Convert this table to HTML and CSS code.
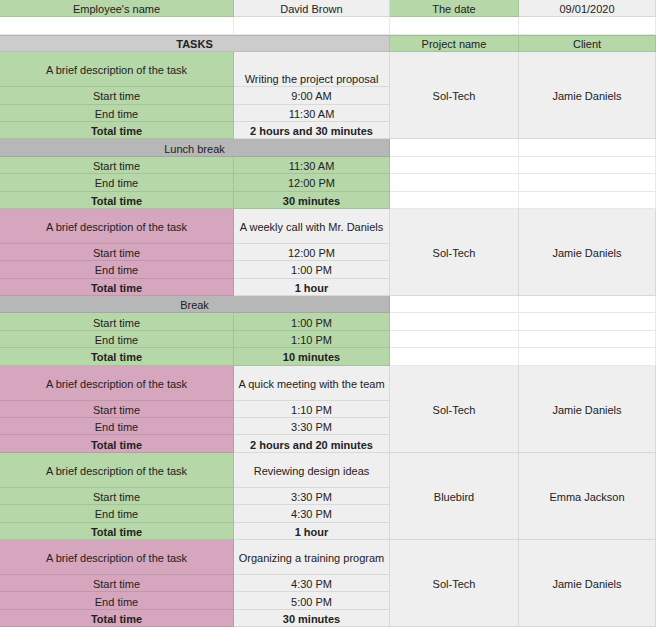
FILE: index.html
```html
<!DOCTYPE html>
<html lang="en">
<head>
<meta charset="utf-8">
<title>Timesheet</title>
<link rel="stylesheet" href="styles.css">
</head>
<body>
<div class="sheet">
  <div class="c g">Employee's name</div>
  <div class="c l">David Brown</div>
  <div class="c g">The date</div>
  <div class="c l">09/01/2020</div>

  <div class="c w"></div><div class="c w"></div><div class="c w"></div><div class="c w"></div>

  <div class="c h b span2 top">TASKS</div>
  <div class="c g top">Project name</div>
  <div class="c g top">Client</div>

  <!-- Task 1 -->
  <div class="c g">A brief description of the task</div>
  <div class="c l bottom">Writing the project proposal</div>
  <div class="c l span4">Sol-Tech</div>
  <div class="c l span4">Jamie Daniels</div>
  <div class="c g">Start time</div><div class="c l">9:00 AM</div>
  <div class="c g">End time</div><div class="c l">11:30 AM</div>
  <div class="c g b">Total time</div><div class="c l b">2 hours and 30 minutes</div>

  <!-- Lunch -->
  <div class="c k span2">Lunch break</div><div class="c w"></div><div class="c w"></div>
  <div class="c g">Start time</div><div class="c g">11:30 AM</div><div class="c w"></div><div class="c w"></div>
  <div class="c g">End time</div><div class="c g">12:00 PM</div><div class="c w"></div><div class="c w"></div>
  <div class="c g b">Total time</div><div class="c g b">30 minutes</div><div class="c w"></div><div class="c w"></div>

  <!-- Task 2 -->
  <div class="c p">A brief description of the task</div>
  <div class="c l">A weekly call with Mr. Daniels</div>
  <div class="c l span4">Sol-Tech</div>
  <div class="c l span4">Jamie Daniels</div>
  <div class="c p">Start time</div><div class="c l">12:00 PM</div>
  <div class="c p">End time</div><div class="c l">1:00 PM</div>
  <div class="c p b">Total time</div><div class="c l b">1 hour</div>

  <!-- Break -->
  <div class="c k span2">Break</div><div class="c w"></div><div class="c w"></div>
  <div class="c g">Start time</div><div class="c g">1:00 PM</div><div class="c w"></div><div class="c w"></div>
  <div class="c g">End time</div><div class="c g">1:10 PM</div><div class="c w"></div><div class="c w"></div>
  <div class="c g b">Total time</div><div class="c g b">10 minutes</div><div class="c w"></div><div class="c w"></div>

  <!-- Task 3 -->
  <div class="c p">A brief description of the task</div>
  <div class="c l">A quick meeting with the team</div>
  <div class="c l span4">Sol-Tech</div>
  <div class="c l span4">Jamie Daniels</div>
  <div class="c p">Start time</div><div class="c l">1:10 PM</div>
  <div class="c p">End time</div><div class="c l">3:30 PM</div>
  <div class="c p b">Total time</div><div class="c l b">2 hours and 20 minutes</div>

  <!-- Task 4 -->
  <div class="c g">A brief description of the task</div>
  <div class="c l">Reviewing design ideas</div>
  <div class="c l span4">Bluebird</div>
  <div class="c l span4">Emma Jackson</div>
  <div class="c g">Start time</div><div class="c l">3:30 PM</div>
  <div class="c g">End time</div><div class="c l">4:30 PM</div>
  <div class="c g b">Total time</div><div class="c l b">1 hour</div>

  <!-- Task 5 -->
  <div class="c p">A brief description of the task</div>
  <div class="c l">Organizing a training program</div>
  <div class="c l span4">Sol-Tech</div>
  <div class="c l span4">Jamie Daniels</div>
  <div class="c p">Start time</div><div class="c l">4:30 PM</div>
  <div class="c p">End time</div><div class="c l">5:00 PM</div>
  <div class="c p b">Total time</div><div class="c l b">30 minutes</div>
</div>
</body>
</html>
```

FILE: styles.css
```css
html, body {
  margin: 0;
  padding: 0;
  background: #ffffff;
}

.sheet {
  display: grid;
  width: 656px;
  grid-template-columns: 234px 156px 129px 137px;
  grid-template-rows:
    17.4px 17.4px 17.4px
    35px 17.4px 17.4px 17.4px
    17.4px 17.4px 17.4px 17.4px
    35px 17.4px 17.4px 17.4px
    17.4px 17.4px 17.4px 17.4px
    35px 17.4px 17.4px 17.4px
    35px 17.4px 17.4px 17.4px
    35px 17.4px 17.4px 17.4px;
  font-family: "Liberation Sans", Arial, sans-serif;
  font-size: 11px;
  color: #222222;
}

.c {
  box-sizing: border-box;
  display: flex;
  align-items: center;
  justify-content: center;
  text-align: center;
  white-space: nowrap;
  overflow: hidden;
  padding-top: 3px;
  border-right: 1px solid rgba(0, 0, 0, 0.09);
  border-bottom: 1px solid rgba(0, 0, 0, 0.09);
  line-height: 13px;
}

.g { background: #b6d7a8; }
.p { background: #d5a6bd; }
.l { background: #efefef; }
.w { background: #ffffff; }
.h { background: #cccccc; }
.k { background: #b7b7b7; }

.b { font-weight: bold; }

.span2 { grid-column: span 2; }
.span4 { grid-row: span 4; }

.bottom {
  align-items: flex-end;
  padding-bottom: 0;
}

.top {
  border-top: 1px solid rgba(0, 0, 0, 0.12);
}
```
